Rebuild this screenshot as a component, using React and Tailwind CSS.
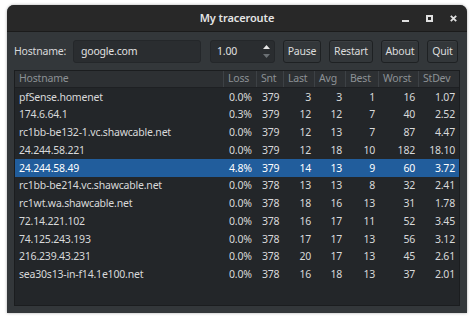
const columns = [
  { name: "Hostname", width: "w-[209px]", align: "text-left" },
  { name: "Loss", width: "w-[33px]", align: "text-left" },
  { name: "Snt", width: "w-[27px]", align: "text-left" },
  { name: "Last", width: "w-[31px]", align: "text-right" },
  { name: "Avg", width: "w-[31px]", align: "text-right" },
  { name: "Best", width: "w-[33px]", align: "text-right" },
  { name: "Worst", width: "w-[40px]", align: "text-right" },
  { name: "StDev", width: "flex-1", align: "text-right" },
];

const hops = [
  ["pfSense.homenet", "0.0%", "379", "3", "3", "1", "16", "1.07"],
  ["174.6.64.1", "0.3%", "379", "12", "12", "7", "40", "2.52"],
  ["rc1bb-be132-1.vc.shawcable.net", "0.0%", "379", "12", "13", "7", "87", "4.47"],
  ["24.244.58.221", "0.0%", "379", "12", "18", "10", "182", "18.10"],
  ["24.244.58.49", "4.8%", "379", "14", "13", "9", "60", "3.72"],
  ["rc1bb-be214.vc.shawcable.net", "0.0%", "378", "13", "13", "8", "32", "2.41"],
  ["rc1wt.wa.shawcable.net", "0.0%", "378", "18", "16", "13", "31", "1.78"],
  ["72.14.221.102", "0.0%", "378", "16", "17", "11", "52", "3.45"],
  ["74.125.243.193", "0.0%", "378", "17", "17", "13", "56", "3.12"],
  ["216.239.43.231", "0.0%", "378", "20", "17", "13", "45", "2.61"],
  ["sea30s13-in-f14.1e100.net", "0.0%", "378", "16", "18", "13", "37", "2.01"],
];

const selected = 4;

function ToolButton({ children, width }) {
  return (
    <button
      type="button"
      className={`h-[23px] ${width} rounded-[3px] border border-[#1e2123] bg-[#33373a] text-[10.5px] tracking-[-0.2px] text-[#dcdcdc] shadow-[inset_0_1px_0_rgba(255,255,255,0.04)]`}
    >
      {children}
    </button>
  );
}

export default function App() {
  return (
    <div className="h-[321px] w-[474px] bg-white px-[7px] pt-[5px] font-['Noto_Sans',sans-serif] text-[#d8d9da]">
      <div className="flex h-[308px] flex-col overflow-hidden rounded-t-[7px] bg-[#33373a] shadow-[0_0_3px_rgba(0,0,0,0.35)]">
        <div className="relative flex h-[27px] items-center justify-center border-b border-[#1b1b1b] bg-[#282828]">
          <span className="text-[11px] font-semibold tracking-[-0.1px] text-[#e4e4e4]">My traceroute</span>
          <div className="absolute right-[10px] top-0 flex h-full items-center gap-[17px]">
            <span className="mt-[6px] block h-[2px] w-[7px] bg-[#e0e0e0]" />
            <span className="block h-[7px] w-[7px] border-2 border-[#e0e0e0]" />
            <svg width="7" height="7" viewBox="0 0 7 7" className="block">
              <path d="M0.8 0.8 L6.2 6.2 M6.2 0.8 L0.8 6.2" stroke="#e0e0e0" strokeWidth="1.8" />
            </svg>
          </div>
        </div>

        <div className="flex h-[38px] items-center pl-[7px] pr-[8px] pt-[1px] text-[10.5px] tracking-[-0.2px]">
          <span className="w-[59px] text-[#d8d9da]">Hostname:</span>
          <div className="flex h-[23px] w-[128px] items-center rounded-[3px] border border-[#24272a] bg-[#2a2d30] pl-[7px] text-[#e0e0e0]">
            google.com
          </div>
          <div className="ml-[9px] flex h-[23px] w-[65px] items-center rounded-[3px] border border-[#24272a] bg-[#2a2d30] pl-[6px] text-[#e0e0e0]">
            <span className="flex-1">1.00</span>
            <div className="mr-[4px] flex flex-col items-center gap-[5px]">
              <svg width="7" height="4" viewBox="0 0 7 4" className="block">
                <path d="M0 4 L3.5 0 L7 4 Z" fill="#e6e6e6" />
              </svg>
              <svg width="7" height="4" viewBox="0 0 7 4" className="block">
                <path d="M0 0 L3.5 4 L7 0 Z" fill="#6b7074" />
              </svg>
            </div>
          </div>
          <div className="ml-[8px] flex gap-[8px]">
            <ToolButton width="w-[38px]">Pause</ToolButton>
            <ToolButton width="w-[44px]">Restart</ToolButton>
            <ToolButton width="w-[38px]">About</ToolButton>
            <ToolButton width="w-[31px]">Quit</ToolButton>
          </div>
        </div>

        <div className="mx-[7px] mb-[7px] flex flex-1 flex-col border border-[#1b1d1f] bg-[#232629] text-[10.5px] tracking-[-0.2px]">
          <div className="flex h-[17px] border-b border-[#1e2023] bg-[#2d3033] text-[#8c9195]">
            {columns.map((col, i) => (
              <div
                key={col.name}
                className={`${col.width} flex items-center px-[4px] ${i < columns.length - 1 ? "border-r border-[#3d4145]" : ""}`}
              >
                {col.name}
              </div>
            ))}
          </div>
          {hops.map((row, r) => (
            <div
              key={row[0]}
              className={`flex h-[17.75px] items-center ${r === selected ? "bg-[#215d9c] text-white" : ""}`}
            >
              {row.map((cell, i) => (
                <div
                  key={i}
                  className={`${columns[i].width} ${columns[i].align} px-[4px] leading-none ${i > 0 ? "pl-[5px]" : ""}`}
                >
                  {cell}
                </div>
              ))}
            </div>
          ))}
        </div>
      </div>
    </div>
  );
}
